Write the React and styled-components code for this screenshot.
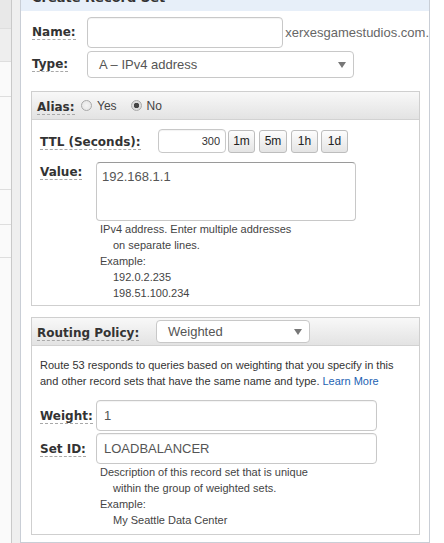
import React from 'react';
import styled, { createGlobalStyle } from 'styled-components';

const GlobalStyle = createGlobalStyle`
  html, body {
    margin: 0;
    padding: 0;
    background: #fff;
    overflow: hidden;
  }
  body {
    font-family: "Liberation Sans", Arial, sans-serif;
    color: #333;
  }
`;

const Page = styled.div`
  display: flex;
  width: 444px;
  height: 543px;
  overflow: hidden;
`;

const Sidebar = styled.div`
  width: 11px;
  flex-shrink: 0;
  display: flex;
  flex-direction: column;
  background: #fafafa;
`;

const SideBlock = styled.div`
  height: ${p => p.$h}px;
  flex-shrink: 0;
  background: ${p => p.$bg || '#fafafa'};
  border-bottom: 1px solid #dedede;
`;

const Gutter = styled.div`
  width: 8px;
  flex-shrink: 0;
  background: #efefef;
  border-left: 1px solid #c9c9c9;
`;

const Panel = styled.div`
  width: 408px;
  flex-shrink: 0;
  margin-top: -15px;
  border: 1px solid #c9ced6;
  border-top: none;
  background: #fff;
`;

const PanelHeader = styled.div`
  height: 26px;
  line-height: 26px;
  padding-left: 11px;
  background: #e7eff9;
  font-family: "DejaVu Sans", Verdana, sans-serif;
  font-weight: bold;
  font-size: 13px;
  color: #333;
`;

const PanelBody = styled.div`
  padding: 6px 0 0 10px;
`;

const Row = styled.div`
  display: flex;
  align-items: ${p => p.$top ? 'flex-start' : 'center'};
  margin-top: ${p => p.$mt || 0}px;
`;

const LabelCell = styled.div`
  width: ${p => p.$w}px;
  flex-shrink: 0;
  padding-left: ${p => p.$pl || 0}px;
  padding-top: ${p => p.$pt || 0}px;
  padding-bottom: ${p => p.$pb || 0}px;
  box-sizing: border-box;
`;

const Label = styled.span`
  font-family: "DejaVu Sans", Verdana, sans-serif;
  font-weight: bold;
  font-size: 12px;
  color: #333;
  border-bottom: 1px dashed #a8a8a8;
`;

const TextInput = styled.input`
  box-sizing: border-box;
  width: ${p => p.$w}px;
  height: ${p => p.$h}px;
  border: 1px solid #c8c8c8;
  border-radius: 4px;
  box-shadow: inset 0 1px 1px rgba(0, 0, 0, 0.05);
  padding: 0 ${p => p.$right ? 5 : 7}px;
  font-family: "Liberation Sans", Arial, sans-serif;
  font-size: ${p => p.$small ? 11 : 13}px;
  color: ${p => p.$small ? '#333' : '#555'};
  text-align: ${p => p.$right ? 'right' : 'left'};
  outline: none;
  background: #fff;
`;

const TextArea = styled.textarea`
  box-sizing: border-box;
  width: 260px;
  height: 59px;
  border: 1px solid #c8c8c8;
  border-top-color: #9a9a9a;
  border-radius: 4px;
  padding: 6px 5px;
  font-family: "Liberation Sans", Arial, sans-serif;
  font-size: 13px;
  line-height: 16px;
  color: #555;
  resize: none;
  outline: none;
`;

const Suffix = styled.span`
  margin-left: 2px;
  font-size: 13px;
  color: #666;
  white-space: nowrap;
`;

const SelectBox = styled.div`
  box-sizing: border-box;
  width: ${p => p.$w}px;
  height: ${p => p.$h}px;
  display: flex;
  align-items: center;
  justify-content: space-between;
  padding: 0 7px 0 11px;
  border: 1px solid #c8c8c8;
  border-radius: 4px;
  background: #fff;
  font-size: 13px;
  color: #555;
`;

const Section = styled.div`
  width: 389px;
  box-sizing: border-box;
  margin-top: ${p => p.$mt}px;
  border: 1px solid #cfcfcf;
`;

const SectionHeader = styled.div`
  height: 27px;
  display: flex;
  align-items: center;
  padding-left: 5px;
  background: linear-gradient(#f8f8f8, #e3e3e3);
  border-bottom: 1px solid #d2d2d2;
`;

const SectionBody = styled.div`
  padding: ${p => p.$pt}px 8px ${p => p.$pb || 4}px 8px;
`;

const RadioGroup = styled.label`
  display: flex;
  align-items: center;
  margin-right: 14px;
  font-size: 12px;
  color: #444;
`;

const RadioDot = styled.span`
  width: 11px;
  height: 11px;
  box-sizing: border-box;
  border-radius: 50%;
  border: 1px solid #a9a9a9;
  background: radial-gradient(circle, ${p => p.$checked ? '#444 0 2.5px, #dcdcdc 3px' : '#f4f4f4 0, #e2e2e2 100%'});
  margin-right: 5px;
`;

const QuickButton = styled.button`
  width: ${p => p.$w || 27}px;
  height: 23px;
  margin-left: ${p => p.$ml || 4}px;
  padding: 0;
  border: 1px solid #bdbdbd;
  border-radius: 3px;
  background: linear-gradient(#fdfdfd, #e4e4e4);
  font-family: "Liberation Sans", Arial, sans-serif;
  font-size: 12px;
  color: #222;
`;

const Help = styled.div`
  margin-left: ${p => p.$ml}px;
  padding-left: 4px;
  font-size: 11px;
  line-height: 16px;
  color: #444;
`;

const Indent = styled.div`
  padding-left: 13px;
`;

const Paragraph = styled.p`
  margin: 0;
  padding-top: 3px;
  font-size: 11px;
  line-height: 16px;
  color: #333;
`;

const Link = styled.a`
  color: #1d62b3;
  text-decoration: none;
  margin-left: 3px;
`;

const Arrow = () => (
  <svg width="8" height="6" viewBox="0 0 8 6">
    <path d="M0 0 L8 0 L4 6 Z" fill="#777" />
  </svg>
);

export default function App() {
  return (
    <>
      <GlobalStyle />
      <Page>
        <Sidebar>
          <SideBlock $h={28} $bg="#e8e8e8" />
          <SideBlock $h={32} $bg="#eeeeee" />
          <SideBlock $h={34} />
          <SideBlock $h={92} />
          <SideBlock $h={34} />
          <SideBlock $h={32} />
        </Sidebar>
        <Gutter />
        <Panel>
          <PanelHeader>Create Record Set</PanelHeader>
          <PanelBody>
            <Row>
              <LabelCell $w={56} $pl={1} $pb={3}><Label>Name:</Label></LabelCell>
              <TextInput $w={197} $h={31} defaultValue="" />
              <Suffix>xerxesgamestudios.com.</Suffix>
            </Row>
            <Row $mt={3}>
              <LabelCell $w={56} $pl={1} $pb={3}><Label>Type:</Label></LabelCell>
              <SelectBox $w={267} $h={27}>
                <span>A – IPv4 address</span>
                <Arrow />
              </SelectBox>
            </Row>

            <Section $mt={13}>
              <SectionHeader>
                <LabelCell $w={44}><Label>Alias:</Label></LabelCell>
                <RadioGroup><RadioDot />Yes</RadioGroup>
                <RadioGroup><RadioDot $checked />No</RadioGroup>
              </SectionHeader>
              <SectionBody $pt={9}>
                <Row>
                  <LabelCell $w={118}><Label>TTL (Seconds):</Label></LabelCell>
                  <TextInput $w={68} $h={24} $right $small defaultValue="300" />
                  <QuickButton $ml={2}>1m</QuickButton>
                  <QuickButton $w={28}>5m</QuickButton>
                  <QuickButton $w={27}>1h</QuickButton>
                  <QuickButton $w={27} $ml={3}>1d</QuickButton>
                </Row>
                <Row $top $mt={9}>
                  <LabelCell $w={56}><Label>Value:</Label></LabelCell>
                  <TextArea defaultValue="192.168.1.1" />
                </Row>
                <Help $ml={56}>
                  <div>IPv4 address. Enter multiple addresses</div>
                  <Indent>on separate lines.</Indent>
                  <div>Example:</div>
                  <Indent>192.0.2.235</Indent>
                  <Indent>198.51.100.234</Indent>
                </Help>
              </SectionBody>
            </Section>

            <Section $mt={11}>
              <SectionHeader>
                <LabelCell $w={119}><Label>Routing Policy:</Label></LabelCell>
                <SelectBox $w={154} $h={23}>
                  <span>Weighted</span>
                  <Arrow />
                </SelectBox>
              </SectionHeader>
              <SectionBody $pt={8} $pb={6}>
                <Paragraph>
                  Route 53 responds to queries based on weighting that you specify in this
                  and other record sets that have the same name and type.
                  <Link href="#">Learn More</Link>
                </Paragraph>
                <Row $mt={11}>
                  <LabelCell $w={56} $pb={2}><Label>Weight:</Label></LabelCell>
                  <TextInput $w={281} $h={31} defaultValue="1" />
                </Row>
                <Row $mt={2}>
                  <LabelCell $w={56} $pb={2}><Label>Set ID:</Label></LabelCell>
                  <TextInput $w={281} $h={31} defaultValue="LOADBALANCER" />
                </Row>
                <Help $ml={56}>
                  <div>Description of this record set that is unique</div>
                  <Indent>within the group of weighted sets.</Indent>
                  <div>Example:</div>
                  <Indent>My Seattle Data Center</Indent>
                </Help>
              </SectionBody>
            </Section>
          </PanelBody>
        </Panel>
      </Page>
    </>
  );
}
